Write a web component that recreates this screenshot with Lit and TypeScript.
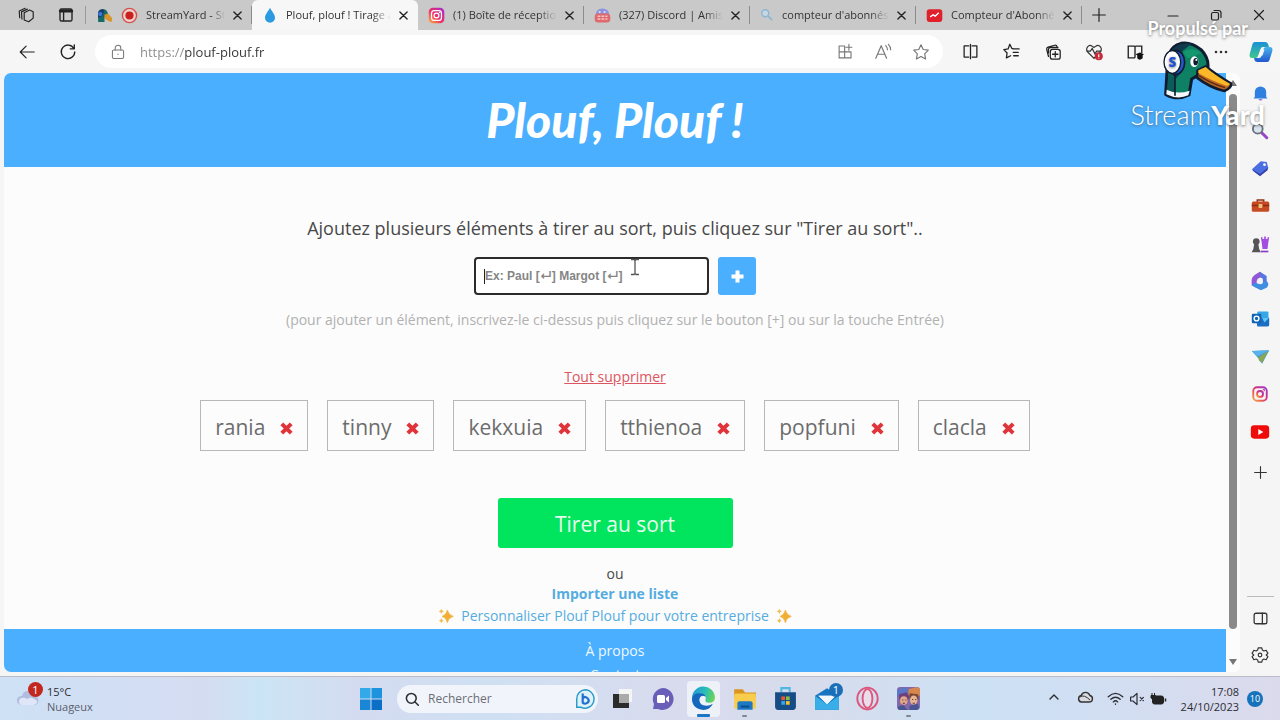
import { LitElement, html, svg, css } from "lit";
import { customElement, property, state } from "lit/decorators.js";
import { classMap } from "lit/directives/class-map.js";

const line = (size: number, paths: unknown, box = 20, width = 1.3) => html`<svg
  width=${size} height=${size} viewBox="0 0 ${box} ${box}" fill="none" stroke="currentColor"
  stroke-width=${width} stroke-linecap="round" stroke-linejoin="round" aria-hidden="true">${paths}</svg>`;

const art = (size: number, paths: unknown, box = 24) => html`<svg
  width=${size} height=${size} viewBox="0 0 ${box} ${box}" aria-hidden="true">${paths}</svg>`;

const cross = line(9, svg`<path d="M1 1l8 8M9 1l-8 8"/>`, 10, 1.5);

const instagram = (size: number) => art(size, svg`
  <defs><linearGradient id="ig" x1="0" y1="1" x2="1" y2="0">
    <stop offset="0" stop-color="#fdb53c"/><stop offset=".45" stop-color="#ef2f62"/><stop offset="1" stop-color="#a02bd8"/>
  </linearGradient></defs>
  <rect x="1" y="1" width="22" height="22" rx="6" fill="url(#ig)"/>
  <rect x="5" y="5" width="14" height="14" rx="4" fill="none" stroke="#fff" stroke-width="1.8"/>
  <circle cx="12" cy="12" r="3.4" fill="none" stroke="#fff" stroke-width="1.8"/><circle cx="16.3" cy="7.8" r="1" fill="#fff"/>`);

const tabIcons = {
  duck: art(17, svg`<path d="M3 21V7Q5 2 11 3q5 1 6 7l-5 5v6z" fill="#176b66"/><path d="M3 8q3-6 9-4l-3 9-6 2z" fill="#1d3a72"/>
    <path d="M12 11l5-2 6 7-1 5-4-1-6-4z" fill="#d9952b"/><circle cx="6" cy="10" r="3" fill="#3b78d8"/>`),
  record: art(17, svg`<circle cx="12" cy="12" r="10" fill="#efd3d0" stroke="#d4524c" stroke-width="2"/><circle cx="12" cy="12" r="5.8" fill="#c9211e"/>`),
  drop: art(16, svg`<path d="M12 1C9 7 4.500 11 4.500 16a7.500 7.500 0 0 0 15 0C19.500 11 15 7 12 1z" fill="#2a9be0"/>`),
  discord: art(17, svg`<path d="M2 12Q3 2 12 2t10 10z" fill="#8b93dd"/><rect x="1" y="9" width="22" height="13" rx="5" fill="#e0696c"/>
    <path d="M5 13h14M5 17h14" stroke="#f3c4c4" stroke-width="2" stroke-dasharray="4 1.500"/><circle cx="8" cy="7" r="1.500" fill="#dfe2fa"/><circle cx="15" cy="7" r="1.500" fill="#dfe2fa"/>`),
  search: art(14, svg`<circle cx="9" cy="9" r="6" fill="#c3d8e4" stroke="#8fb6d0" stroke-width="2.500"/><path d="M14 14l7 7" stroke="#8fb6d0" stroke-width="3"/>`),
  counter: art(17, svg`<rect x="1" y="3" width="22" height="18" rx="4" fill="#e0202b"/><path d="M6 14l4-3 3 2 5-5" fill="none" stroke="#fff" stroke-width="2"/>`),
};

const barIcons = {
  workspaces: line(18, svg`<path d="M8 7.500l6-3 4 2v7l-5 4-5-2zM5.500 14.500l-.5-8 6.500-3M3 13l-.5-7.500L9 2.500"/>`),
  panes: line(16, svg`<rect x="2.500" y="2.500" width="15" height="15" rx="2"/><path d="M3 5h14" stroke-width="4"/><path d="M7 6v11"/>`, 20, 1.7),
  plus: line(14, svg`<path d="M10 1v18M1 10h18"/>`, 20, 1.7),
  minimize: line(12, svg`<path d="M1 7h10"/>`, 12, 1.2),
  restore: line(12, svg`<rect x="1.500" y="3.500" width="7" height="7.500" rx="1.500"/><path d="M4 1.500h4.500Q11 1.500 11 4v4.500"/>`, 12, 1.2),
  close: line(12, svg`<path d="M1.500 1.500l9 9M10.500 1.500l-9 9"/>`, 12, 1.2),
  back: line(18, svg`<path d="M18 10H2.500M9 3.500L2.500 10 9 16.500"/>`),
  reload: line(18, svg`<path d="M16.500 6A7.500 7.500 0 1 0 17.500 10M17 2v4.500h-4.500"/>`, 20, 1.5),
  lock: line(16, svg`<rect x="3" y="7.500" width="14" height="10.500" rx="1.800"/><path d="M6.500 7.500V5a3.500 3.500 0 0 1 7 0v2.500M10 12.500v.5"/>`),
  apps: line(17, svg`<path d="M2.500 3.500H9v14H2.500zM2.500 10.500h14v7H9M14 1.500v7M10.500 5h7"/>`),
  star: line(18, svg`<path d="M10 2l2.500 5.200 5.600.8-4 4 1 5.700-5.100-2.700-5.100 2.700 1-5.700-4-4 5.600-.8z"/>`),
  split: line(17, svg`<path d="M8 3.500H2.500v13H8M12 3.500h5.500v13H12M10 1.500v17"/>`, 20, 1.5),
  favorites: line(17, svg`<path d="M12 6.500H10.500L8 1.500 6 7l-5 .8 3.800 3.900L4 17.500l5-2.500M12 7h7M12 11h6M12.500 15H18"/>`, 20, 1.5),
  collections: line(18, svg`<rect x="7" y="7" width="11" height="11" rx="2.500"/><path d="M12.500 9.500v6M9.500 12.500h6M5 15l-2-8Q2.800 5 4.500 4.500L12 2.500q2-.3 2.500 1.500M5 11V6.500Q5.500 5 7 5h8.500"/>`, 20, 1.4),
  health: html`<svg width="18" height="18" viewBox="0 0 20 20" fill="none" stroke="#333" stroke-width="1.300" aria-hidden="true">
    <path d="M10 17L3 10C0 6 4 1 8 3.500L10 5l2-1.500C16 1 20 6 17 10z"/><path d="M1.500 9H6l2-3 3 6 2-3h5"/><circle cx="15.300" cy="14.800" r="4.500" fill="#c52b39" stroke="none"/><path d="M15.300 12.500v3M15.300 16.500v.8" stroke="#fff"/></svg>`,
  reader: html`<svg width="18" height="18" viewBox="0 0 20 20" fill="none" stroke="#222" stroke-width="1.500" aria-hidden="true">
    <path d="M10 16.500H2.500v-13H9q1 0 1 1v12M10 4.500q0-1 1-1h6.500V11"/><path d="M10.500 12.500l5-2 4.500 2-1.500 1v3.500q-3.500 3-6 0v-3.500z" fill="#111" stroke="none"/></svg>`,
  more: html`<svg width="14" height="4" viewBox="0 0 14 4" fill="#333" aria-hidden="true"><circle cx="2" cy="2" r="1.300"/><circle cx="7" cy="2" r="1.300"/><circle cx="12" cy="2" r="1.300"/></svg>`,
  copilot: art(24, svg`<defs><linearGradient id="cpa" x1="0" y1="0" x2="0" y2="1"><stop offset="0" stop-color="#1b8fd8"/><stop offset="1" stop-color="#3fc78d"/></linearGradient>
    <linearGradient id="cpb" x1="0" y1="0" x2="0" y2="1"><stop offset="0" stop-color="#47b4ea"/><stop offset="1" stop-color="#2157d0"/></linearGradient></defs>
    <path d="M6 2h10q2.500 0 3 2l1 3h-6q-2 0-2.500 2L9 16q-.5 2-2.500 2H3q-3 0-2.300-4L3.500 4Q4 2 6 2z" fill="url(#cpa)"/>
    <path d="M17 7h4q3 0 2.300 4l-2.800 9q-.5 2-2.500 2H8.500q-2.500 0-3-2L5 18h5q2 0 2.500-2l2-7q.5-2 2.500-2z" fill="url(#cpb)"/>
    <path d="M13.500 9.500h2l-2 6h-2.200z" fill="#f5f5f5"/>`),
};

const sideIcons = [
  { name: "Notifications", icon: art(17, svg`<path d="M4 17V10a8 8 0 0 1 16 0v7l2 2H2z" fill="#2f7fe0"/><path d="M9 20h6q-3 4-6 0z" fill="#6a4fd0"/>`) },
  { name: "Recherche", icon: art(18, svg`<path d="M13 13l8 8" stroke="#9845c8" stroke-width="4" stroke-linecap="round"/><circle cx="9" cy="9" r="6.500" fill="#d8e4ef" stroke="#68707c" stroke-width="2.500"/>`) },
  { name: "Achats", icon: art(18, svg`<path d="M2 13L13 3l8 1 2 8-10 9q-2 1-3 0l-8-6q-1-1 0-2z" fill="#4b6fe2"/><path d="M2 14l10 6 11-9-1 4-10 8-9-7z" fill="#353fa8"/><circle cx="18" cy="7.500" r="1.800" fill="#fff"/>`) },
  { name: "Outils", icon: art(19, svg`<path d="M8 8V5h8v3" fill="none" stroke="#8c3418" stroke-width="2"/><rect x="1" y="7" width="22" height="13" rx="2" fill="#c64a22"/><path d="M1 12h22" stroke="#8f2e16" stroke-width="2"/><rect x="9.500" y="10" width="5" height="5" rx="1" fill="#f0c27a"/>`) },
  { name: "Jeux", icon: art(20, svg`<path d="M13 4h2v2h2V3h2v3h2V4h2l-1 6-1 8h-6l-1-8z" fill="#a44be0"/><circle cx="7.500" cy="9" r="4" fill="#555"/><path d="M5 12h5l1 6 2 4H2l2-4z" fill="#555"/><path d="M13 20h9v2h-9z" fill="#8c3ac8"/>`) },
  { name: "Microsoft 365", icon: art(20, svg`<path d="M12 1l8 5v7l-5 2V9L7 5z" fill="#5478e0"/><path d="M12 1L7 4Q2 7 2 11v6l6 3v-8l5-5z" fill="#9058d8"/><path d="M2 17l4-3 7 2 7-4q4 4 0 8l-7 3-6-3z" fill="#3e8fe2"/><circle cx="12" cy="12" r="3.600" fill="#f3f3f3"/>`) },
  { name: "Outlook", icon: art(19, svg`<rect x="8" y="3" width="14" height="10" rx="1" fill="#37a6e8"/><path d="M6 11h17v9q0 2-2 2H8z" fill="#1a6fc4"/><path d="M14 11h9l-6 6z" fill="#5cc6f5"/><rect x="1" y="6" width="12" height="12" rx="1.500" fill="#0f64b4"/><circle cx="7" cy="12" r="3" fill="none" stroke="#fff" stroke-width="1.800"/>`) },
  { name: "Drop", icon: art(19, svg`<path d="M1 5l22-1-9 17-4-6z" fill="#3c9bdb"/><path d="M22 5L9 13l1 4 4 3z" fill="#8aa650"/><path d="M1 5l22-1L8 12z" fill="#59b3ea"/>`) },
  { name: "Instagram", icon: html`<svg width="18" height="18" viewBox="0 0 24 24" fill="none" stroke="url(#igs)" stroke-width="2.500" aria-hidden="true"><defs><linearGradient id="igs" x1="0" y1="1" x2="1" y2="0"><stop offset="0" stop-color="#f7a63c"/><stop offset=".5" stop-color="#e0336f"/><stop offset="1" stop-color="#9a33cf"/></linearGradient></defs><rect x="3" y="3" width="18" height="18" rx="5"/><circle cx="12" cy="12" r="4"/><circle cx="17" cy="7" r=".5"/></svg>` },
  { name: "YouTube", icon: art(20, svg`<rect x="1" y="4" width="22" height="16" rx="4" fill="#f00b0b"/><path d="M10 8.500v7l6-3.500z" fill="#fff"/>`) },
];

const sparkles = art(16, svg`<path d="M14 3q1.500 7.500 9 9.500-7.500 2-9 9.500-1.500-7.500-8-9.500 6.500-2 8-9.500z" fill="#f2ae34" stroke="#f2ae34"/>
  <path d="M5 1q.7 3.200 4 4-3.300.8-4 4-.7-3.200-4-4 3.300-.8 4-4zM5 15q.7 3.200 3.500 4-2.800.8-3.500 4-.7-3.200-3.500-4 2.800-.8 3.500-4z" fill="#f0bd55"/>`);

@customElement("browser-tab")
class BrowserTab extends LitElement {
  @property() label = "";
  @property({ type: Boolean, reflect: true }) active = false;
  @property({ attribute: false }) icons: unknown[] = [];
  static styles = css`
    :host { flex: 0 1 166px; min-width: 0; display: flex; align-items: center; gap: 8px; box-sizing: border-box;
      padding: 0 6px 0 10px; height: 30px; position: relative; color: #333; }
    :host(:not([active]))::after { content: ""; position: absolute; right: 0; top: 6px; height: 18px; width: 1px; background: #8c8c8c; }
    :host([active]) { background: #f7f7f7; border-radius: 6px 6px 0 0; }
    :host([active])::after { display: none; }
    .icon { display: flex; }
    .label { flex: 1; min-width: 0; overflow: hidden; white-space: nowrap; font: 11px/18px "Open Sans", sans-serif;
      mask-image: linear-gradient(90deg, #000 82%, transparent); }
    .close { display: flex; border: 0; padding: 4px; margin-left: -4px; background: none; color: #222; }
  `;
  render() {
    return html`${this.icons.map((i) => html`<span class="icon">${i}</span>`)}
      <span class="label">${this.label}</span><button class="close" aria-label="Fermer l'onglet">${cross}</button>`;
  }
}

@customElement("browser-chrome")
class BrowserChrome extends LitElement {
  static styles = css`
    :host { display: block; font-family: "Open Sans", sans-serif; }
    button { display: flex; align-items: center; justify-content: center; border: 0; padding: 0; background: none; color: #222; }
    .tabs { display: flex; align-items: center; height: 30px; background: #c9c9c9; }
    .lead { display: flex; justify-content: space-around; align-items: center; width: 86px; padding-left: 6px; box-sizing: border-box; border-right: 1px solid #999; height: 18px; flex: none; }
    .new { width: 34px; height: 30px; }
    .window { margin-left: auto; display: flex; }
    .window button { width: 43px; height: 30px; }
    .toolbar { display: flex; align-items: center; height: 43px; background: #f6f6f6; }
    .nav { display: flex; width: 95px; padding-left: 6px; box-sizing: border-box; flex: none; }
    .nav button { width: 41px; }
    .address { flex: 1; min-width: 0; display: flex; align-items: center; height: 33px; border-radius: 17px; background: #fff; padding: 0 3px 0 15px; color: #777; }
    .url { flex: 1; min-width: 0; margin-left: 14px; border: 0; outline: 0; padding: 0; font: 13px/20px "Open Sans", sans-serif;
      color: transparent; background: linear-gradient(90deg, #8a8a8a 45px, #333 45px) text; }
    .address button { width: 38px; color: #777; }
    .tools { display: flex; padding-left: 7px; }
    .tools button { width: 41px; }
    .profile { width: 45px; }
    .tools .copilot { width: 39px; }
  `;
  render() {
    const i = tabIcons;
    const b = barIcons;
    return html`
      <div class="tabs">
        <div class="lead"><button aria-label="Espaces de travail">${b.workspaces}</button><button aria-label="Onglets">${b.panes}</button></div>
        <browser-tab label="StreamYard - Stu" .icons=${[i.duck, i.record]}></browser-tab>
        <browser-tab active label="Plouf, plouf ! Tirage a" .icons=${[i.drop]}></browser-tab>
        <browser-tab label="(1) Boîte de réceptio" .icons=${[instagram(17)]}></browser-tab>
        <browser-tab label="(327) Discord | Amis" .icons=${[i.discord]}></browser-tab>
        <browser-tab label="compteur d'abonnés" .icons=${[i.search]}></browser-tab>
        <browser-tab label="Compteur d'Abonné" .icons=${[i.counter]}></browser-tab>
        <button class="new" aria-label="Nouvel onglet">${b.plus}</button>
        <div class="window">
          <button aria-label="Réduire">${b.minimize}</button><button aria-label="Restaurer">${b.restore}</button><button aria-label="Fermer">${b.close}</button>
        </div>
      </div>
      <div class="toolbar">
        <div class="nav"><button aria-label="Retour">${b.back}</button><button aria-label="Actualiser">${b.reload}</button></div>
        <div class="address">${b.lock}
          <input class="url" aria-label="Adresse" value="https://plouf-plouf.fr" />
          <button aria-label="Applications">${b.apps}</button>
          <button aria-label="Lecture à voix haute">${line(18, svg`<path d="M2 17L8 3l6 14M4 12.500h8M13 3q2 2 2 4.500M16 1.500q2.500 2.500 2.500 6"/>`)}</button>
          <button aria-label="Favori">${b.star}</button>
        </div>
        <div class="tools">
          <button aria-label="Fractionner">${b.split}</button><button aria-label="Favoris">${b.favorites}</button>
          <button aria-label="Collections">${b.collections}</button><button aria-label="Performances">${b.health}</button>
          <button aria-label="Lecteur">${b.reader}</button><span class="profile"></span>
          <button aria-label="Plus">${b.more}</button><button class="copilot" aria-label="Copilot">${b.copilot}</button>
        </div>
      </div>`;
  }
}

@customElement("plouf-page")
class PloufPage extends LitElement {
  @state() names = ["rania", "tinny", "kekxuia", "tthienoa", "popfuni", "clacla"];
  static styles = css`
    :host { display: block; background: #fcfcfc; color: #484848; font: 14px/20px "Open Sans", sans-serif; text-align: center; overflow: hidden; }
    a { text-decoration: none; color: #55ace0; }
    button { border: 0; padding: 0; font: inherit; }
    header { height: 94px; display: flex; align-items: center; justify-content: center; background: #4aaffe; }
    h1 { margin: 0; color: #fff; font: italic 900 48px/60px Lato, cursive; }
    main { display: flex; flex-direction: column; align-items: center; padding: 46px 16px 3px; }
    h2 { margin: 0 0 14px; font-size: 18px; line-height: 30px; font-weight: 400; }
    form { display: flex; gap: 9px; }
    .field { position: relative; display: flex; }
    .entry { box-sizing: border-box; width: 235px; height: 38px; border: 2px solid #2b2b2b; border-radius: 4px; background: #fff; outline: 0;
      padding: 0 9px; font: bold 12px "Liberation Sans", Inter, sans-serif; }
    .entry::placeholder { color: #858585; opacity: 1; }
    .caret { position: absolute; left: 10px; top: 12px; width: 1px; height: 15px; background: #222; }
    .pointer { position: absolute; left: 155px; top: 1px; }
    .add { display: flex; align-items: center; justify-content: center; width: 38px; height: 38px; border-radius: 3px; background: #4aaffe; }
    .hint { margin: 15px 0 37px; color: #b1b1b1; }
    .clear { background: none; color: #dc5560; text-decoration: underline; margin-bottom: 13px; }
    ul { display: flex; flex-wrap: wrap; justify-content: center; gap: 19px; margin: 0 0 47px; padding: 0; list-style: none; }
    li { display: flex; align-items: center; gap: 15px; height: 51px; box-sizing: border-box; padding: 3px 14px 0; border: 1px solid #b8b8b8; font-size: 21px; line-height: 30px; color: #6c6c6c; }
    .remove { display: flex; background: none; padding-top: 3px; }
    .draw { width: 235px; height: 50px; padding-top: 2px; border-radius: 3px; background: #00e45e; color: #e8fff0; font-size: 21px; margin-bottom: 16px; }
    .import { font-weight: 700; }
    .custom { display: flex; align-items: center; gap: 7px; margin-top: 2px; }
    footer { display: flex; flex-direction: column; align-items: center; background: #4aaffe; padding: 10px; line-height: 24px; }
    footer a { color: #eff8ff; }
  `;
  remove(name: string) {
    this.names = this.names.filter((n) => n !== name);
  }
  render() {
    return html`
      <header><h1>Plouf, Plouf !</h1></header>
      <main>
        <h2>Ajoutez plusieurs éléments à tirer au sort, puis cliquez sur "Tirer au sort"..</h2>
        <form @submit=${(e: Event) => e.preventDefault()}>
          <div class="field">
            <input class="entry" aria-label="Élément à ajouter" placeholder="Ex: Paul [↵] Margot [↵]" />
            <span class="caret"></span>
            <svg class="pointer" width="12" height="18" viewBox="0 0 12 18" fill="none" stroke="#555" stroke-width="1.300" aria-hidden="true"><path d="M2 1.500h3l1 1 1-1h3M6 2v14M2 16.500h3l1-1 1 1h3"/></svg>
          </div>
          <button class="add" aria-label="Ajouter"><svg width="13" height="13" viewBox="0 0 13 13" stroke="#fff" stroke-width="4" aria-hidden="true"><path d="M6.500.5v12M.5 6.500h12"/></svg></button>
        </form>
        <p class="hint">(pour ajouter un élément, inscrivez-le ci-dessus puis cliquez sur le bouton [+] ou sur la touche Entrée)</p>
        <button class="clear" @click=${() => (this.names = [])}>Tout supprimer</button>
        <ul>${this.names.map((n) => html`<li>${n}<button class="remove" aria-label="Supprimer ${n}" @click=${() => this.remove(n)}>
          <svg width="13" height="13" viewBox="0 0 13 13" stroke="#e0343b" stroke-width="4" aria-hidden="true"><path d="M1.800 1.800l9.400 9.400M11.200 1.800l-9.400 9.400"/></svg></button></li>`)}</ul>
        <button class="draw">Tirer au sort</button>
        <span>ou</span>
        <a class="import" href="#import">Importer une liste</a>
        <a class="custom" href="#entreprise">${sparkles}<span>Personnaliser Plouf Plouf pour votre entreprise</span>${sparkles}</a>
      </main>
      <footer><a href="#a-propos">À propos</a><a href="#contact">Contact</a></footer>`;
  }
}

@customElement("side-bar")
class SideBar extends LitElement {
  static styles = css`
    :host { display: flex; flex-direction: column; align-items: center; background: #f5f5f5; width: 40px; box-sizing: border-box; padding: 9px 0 10px; color: #333; }
    button { display: flex; align-items: center; justify-content: center; border: 0; padding: 0; background: none; color: inherit; width: 32px; height: 22px; }
    .apps { display: flex; flex-direction: column; justify-content: space-between; flex: 0 1 361px; margin-bottom: 18px; }
    .bottom { margin-top: auto; display: flex; flex-direction: column; align-items: center; gap: 15px; border-top: 1px solid #bbb; padding: 10px 0 0; width: 27px; }
  `;
  render() {
    return html`<nav class="apps">${sideIcons.map((s) => html`<button aria-label=${s.name}>${s.icon}</button>`)}</nav>
      <button aria-label="Personnaliser">${line(13, svg`<path d="M10 1v18M1 10h18"/>`, 20, 1.7)}</button>
      <div class="bottom">
        <button aria-label="Volet">${line(15, svg`<rect x="1.500" y="3" width="17" height="14" rx="2.500"/><path d="M12.500 3v14"/>`, 20, 1.7)}</button>
        <button aria-label="Paramètres">${line(18, svg`<path d="M8 2h4l.6 2.500 1.700 1 2.500-.8 2 3.500-1.900 1.800 1.900 1.800-2 3.500-2.500-.8-1.700 1L12 18H8l-.6-2.500-1.700-1-2.500.8-2-3.500L3.100 10 1.200 8.200l2-3.500 2.500.8 1.700-1z"/><circle cx="10" cy="10" r="2"/>`)}</button>
      </div>`;
  }
}

const taskApps = [
  { name: "Vue des tâches", icon: art(24, svg`<rect x="9" y="2" width="13" height="13" fill="#f5f5f5"/><rect x="3" y="7" width="16" height="14" fill="#2b2b2b"/><rect x="9" y="7" width="10" height="9" fill="#aaa"/>`) },
  { name: "Conversation", icon: art(24, svg`<path d="M12 1a11 11 0 1 1-5 21H2l1-5A11 11 0 0 1 12 1z" fill="#6a5fb8"/><rect x="6" y="8" width="8" height="8" rx="1.500" fill="#fff"/><path d="M15 11l3-2.500v7L15 13z" fill="#fff"/>`) },
  { name: "Edge", active: true, icon: art(25, svg`<defs><linearGradient id="eda" x1="0" y1="0" x2="1" y2=".3"><stop offset="0" stop-color="#1e94dc"/><stop offset=".6" stop-color="#2cbfb5"/><stop offset="1" stop-color="#6ad257"/></linearGradient></defs>
    <path d="M1 12A11 11 0 0 1 23 11q0 5-6 5-4 0-3-3 1-4-3-4-6 0-6 6 0 5 5 8Q1 20 1 12z" fill="url(#eda)"/><path d="M1 12q1-5 7-5 5 0 6 3-5-2-6 3 0 6 7 6 3 0 6-2-3 6-9 6Q1 22 1 12z" fill="#1566bd"/>`) },
  { name: "Explorateur", open: true, icon: art(26, svg`<path d="M2 3h8l2 3h10v5H2z" fill="#d9951e"/><rect x="2" y="7" width="20" height="14" rx="1.500" fill="#f8cc4d"/><path d="M5 16q0-2 2-2h10q2 0 2 2v6H5z" fill="#1d79c4"/><path d="M8 19h8" stroke="#0d508e" stroke-width="2"/>`) },
  { name: "Store", icon: art(25, svg`<path d="M8 6V2h8v4" fill="none" stroke="#50b7e2" stroke-width="2"/><path d="M2 6h20v14q0 3-3 3H5q-3 0-3-3z" fill="#164d84"/><path d="M8 10h3.500v3.500H8z" fill="#f0552c"/><path d="M12.500 10H16v3.500h-3.500z" fill="#84c044"/><path d="M8 14.500h3.500V18H8z" fill="#35a8e8"/><path d="M12.500 14.500H16V18h-3.500z" fill="#f8c12c"/>`) },
  { name: "Courrier", count: 1, icon: art(26, svg`<path d="M1 9l11-7 11 7v13H1z" fill="#1676c2"/><path d="M4 9h16l-8 8z" fill="#f3f8fc"/><path d="M1 9l11 8L23 9v13H1z" fill="#39aee8"/><path d="M4 9h16l-8 7z" fill="#f3f8fc"/>`) },
  { name: "Opera", icon: art(25, svg`<ellipse cx="12" cy="12" rx="9.800" ry="10.500" fill="none" stroke="#dd557c" stroke-width="1.800"/><ellipse cx="12" cy="12" rx="4.700" ry="9" fill="#eadce8" stroke="#dd557c" stroke-width="1.800"/>`) },
  { name: "Jeu", open: true, icon: art(25, svg`<rect x="1" y="1" width="22" height="22" rx="3" fill="#8468a8"/><path d="M1 4l7-3 7 4-4 5H1z" fill="#5b76c4"/><path d="M12 3l8-2 3 2v6H12z" fill="#d9864c"/><path d="M3 8l7-2 3 4-1 3H3z" fill="#6d3f7c"/><path d="M13 7l8 1 1 5h-9z" fill="#7a4630"/>
    <ellipse cx="7.500" cy="14" rx="3.600" ry="4.200" fill="#e2a888"/><ellipse cx="17" cy="13.500" rx="3.600" ry="4.400" fill="#e6b393"/><path d="M2 20l5-2 4 5H3q-2-1-1-3zM13 19l8-2 1 4-2 2h-7z" fill="#4a5594"/><path d="M6 13.500h1M9 13.500h1M15.500 13h1M18.500 13h1M6.500 16.500h2M16 16.500h2" stroke="#5b2b35"/>`) },
] as { name: string; icon: unknown; active?: boolean; open?: boolean; count?: number }[];

@customElement("task-bar")
class TaskBar extends LitElement {
  static styles = css`
    :host { display: grid; grid-template-columns: 1fr auto 1fr; align-items: center; height: 44px; box-sizing: border-box; border-top: 1px solid #b9bcc6;
      background: linear-gradient(90deg, #cee1f5, #d5dcf2 16%, #cbe5f5 20%, #d4dbf0 28%, #cfe0f3 38%, #d8dbee 52%, #d6dcec 64%, #cce1f4 76%, #d0dff3 84%, #dbdaec);
      font: 11px/15px "Open Sans", sans-serif; color: #2b2d33; }
    button { border: 0; padding: 0; background: none; font: inherit; color: inherit; display: flex; align-items: center; justify-content: center; }
    .weather { display: flex; justify-self: start; gap: 8px; padding-left: 16px; text-align: left; position: relative; }
    .weather small { display: block; font-size: 11px; color: #5a606c; }
    .alert, .count { position: absolute; display: flex; align-items: center; justify-content: center; border-radius: 50%; color: #fff; }
    .alert { left: 28px; top: -2px; width: 15px; height: 15px; background: #c2281f; }
    .apps { display: flex; align-items: center; padding-left: 2px; }
    .start { width: 36px; height: 36px; margin-right: 8px; }
    .search { display: flex; align-items: center; gap: 9px; width: 201px; height: 28px; box-sizing: border-box; padding: 0 2px 0 8px; border-radius: 14px; background: #f1f5fb; margin-right: 3px; }
    .search input { flex: 1; min-width: 0; border: 0; outline: 0; padding: 0; background: none; font: 12px/18px "Open Sans", sans-serif; }
    .search input::placeholder { color: #6b6e76; opacity: 1; }
    .app { position: relative; width: 33px; height: 36px; margin: 0 4px; border-radius: 4px; }
    .app.active { background: #eef1f8; }
    .app.active::after, .app.open::after { content: ""; position: absolute; bottom: 0; width: 5px; height: 2px; border-radius: 1px; background: #808590; }
    .app.active::after { width: 13px; height: 3px; background: #1976c4; }
    .count { right: 0; top: 2px; width: 14px; height: 14px; background: #1a6fb8; }
    .tray { display: flex; align-items: center; justify-self: end; gap: 5px; padding-right: 17px; }
    .tray .up { margin-right: 12px; }
    .tray .cloud { margin-right: 8px; }
    .clock { text-align: right; margin-left: 9px; }
    .clock time { display: block; }
    .badge { display: flex; align-items: center; justify-content: center; width: 16px; height: 16px; border-radius: 50%; background: #1673bb; color: #fff; font-size: 9px; margin-left: 3px; }
  `;
  render() {
    return html`
      <button class="weather">
        <svg width="23" height="30" viewBox="0 0 23 30" aria-hidden="true"><path d="M5 21a4.500 4.500 0 0 1 1-9q1-5 6-5t6 5a4.500 4.500 0 0 1 0 9z" fill="#b0bde0"/><path d="M5 21a4 4 0 0 1 0-7q4-1 6 1 4-3 7 0 4 1 3 4l-3 2z" fill="#dfe6f7"/></svg>
        <span class="alert">1</span><span>15°C<small>Nuageux</small></span>
      </button>
      <div class="apps">
        <button class="start" aria-label="Démarrer"><svg width="22" height="22" viewBox="0 0 22 22" aria-hidden="true"><path d="M0 0h10.500v10.500H0z" fill="#32a9e8"/><path d="M11.500 0H22v10.500H11.500z" fill="#1c93dd"/><path d="M0 11.500h10.500V22H0z" fill="#1986d6"/><path d="M11.500 11.500H22V22H11.500z" fill="#0b6fc6"/></svg></button>
        <label class="search">${line(14, svg`<circle cx="9" cy="9" r="7"/><path d="M14 14l5 5"/>`, 20, 2.2)}
          <input aria-label="Rechercher" placeholder="Rechercher" />
          ${art(22, svg`<path d="M12 2a10 10 0 1 1-4.500 19H3V12a9.500 9.500 0 0 1 9-10z" fill="#dff2fa" stroke="#2a9bc8" stroke-width="1.600"/><path d="M9.500 6v10q2 2 4.500.5t2-3.500-3-3-2.500 1.500" fill="none" stroke="#216fd0" stroke-width="2.400"/>`)}
        </label>
        ${taskApps.map((a) => html`<button class=${classMap({ app: true, active: !!a.active, open: !!a.open })} aria-label=${a.name}>${a.icon}${a.count ? html`<span class="count">${a.count}</span>` : ""}</button>`)}
      </div>
      <div class="tray">
        <span class="up">${line(12, svg`<path d="M2 8l4-4 4 4"/>`, 12, 1.4)}</span>
        <span class="cloud"><svg width="17" height="14" viewBox="0 0 17 14" fill="#d8dbe0" stroke="#333" stroke-width="1.400" aria-hidden="true"><path d="M4.500 12a3.300 3.300 0 0 1-.3-6.500 4.600 4.600 0 0 1 8.700 0A3.300 3.300 0 0 1 12.500 12z"/><path d="M3 7q4-3 10 3" stroke-width="1"/></svg></span>
        ${line(17, svg`<path d="M1.500 8q8.500-8 17 0M4.500 11q5.500-5 11 0M7.500 14q2.500-2.500 5 0M10 16.500v.3"/>`, 20, 1.6)}
        ${line(16, svg`<path d="M2 7.500h3L10 3v14l-5-4.500H2zM14 8l4 4M18 8l-4 4"/>`, 20, 1.5)}
        <svg width="17" height="14" viewBox="0 0 17 14" aria-hidden="true"><rect x="2.500" y="4" width="11" height="8" rx="2" fill="#222" stroke="#222"/><path d="M15.500 6.500v3" stroke="#222" stroke-width="1.500"/><path d="M2 1v2M4.500 1v2M1 3.500h4.500V6l-2 1.500L1 6z" stroke="#222" fill="#222"/></svg>
        <div class="clock"><time>17:08</time><time>24/10/2023</time></div>
        <span class="badge">10</span>
      </div>`;
  }
}

@customElement("stream-mark")
class StreamMark extends LitElement {
  static styles = css`
    :host { display: flex; flex-direction: column; align-items: center; color: #fff; font-family: Lato, sans-serif; text-shadow: 0 1px 3px rgba(70, 70, 70, 0.7); }
    .by { font-weight: 700; font-size: 18px; line-height: 22px; }
    .brand { font-weight: 300; font-size: 27px; line-height: 28px; }
    .brand b { font-weight: 900; }
    .letter { font: 800 40px "Open Sans", sans-serif; }
  `;
  render() {
    return html`<span class="by">Propulsé par</span>
      <svg width="73" height="62" viewBox="1020 120 219 186" aria-hidden="true">
        <path d="M1038 215L1034 286Q1068 306 1104 288L1112 240 1160 212Q1166 178 1140 152 1110 128 1080 133 1054 140 1046 162z" fill="#0e8063" stroke="#101c30" stroke-width="9" stroke-linejoin="round"/>
        <path d="M1048 160Q1066 128 1112 134L1084 156 1088 210 1066 238 1042 220z" fill="#12384c"/>
        <path d="M1042 222L1062 236V290L1038 282z" fill="#0b5b58"/>
        <path d="M1086 160Q1112 140 1142 162L1100 178z" fill="#13976d"/>
        <path d="M1037 272Q1068 288 1106 275L1102 289Q1070 303 1036 286z" fill="#f5f7f8"/>
        <path d="M1062 222V290" stroke="#101c30" stroke-width="5"/>
        <path d="M1130 214L1154 202Q1180 224 1230 254 1232 266 1210 276 1166 266 1128 236z" fill="#bd6722" stroke="#101c30" stroke-width="8" stroke-linejoin="round"/>
        <path d="M1132 214L1154 204Q1180 228 1228 255L1218 261Q1172 246 1132 222z" fill="#fbb829"/>
        <path d="M1134 230Q1170 254 1212 266" stroke="#5a2b16" stroke-width="4" fill="none"/>
        <ellipse cx="1120" cy="188" rx="12" ry="16" fill="#fff"/><ellipse cx="1124" cy="188" rx="7" ry="11" fill="#101c30"/><circle cx="1126" cy="183" r="3" fill="#fff"/>
        <ellipse cx="1064" cy="190" rx="27" ry="36" fill="#2457cc" stroke="#101c30" stroke-width="5"/>
        <ellipse cx="1054" cy="189" rx="25" ry="34" fill="#fff" stroke="#101c30" stroke-width="4"/>
        <text class="letter" x="1054" y="203" text-anchor="middle" fill="#2350d0">S</text>
      </svg>
      <span class="brand">Stream<b>Yard</b></span>`;
  }
}

@customElement("app-root")
class AppRoot extends LitElement {
  static styles = css`
    :host { display: grid; grid-template-rows: auto minmax(0, 1fr) auto; height: 100vh; position: relative; overflow: hidden; background: #f5f5f5; }
    .body { display: flex; min-height: 0; }
    .view { flex: 1; min-width: 0; display: flex; margin: 0 0 4px 4px; border-radius: 7px; overflow: hidden; background: #fff; }
    .page { flex: 1; min-width: 0; }
    .scroll { display: flex; flex-direction: column; align-items: center; width: 14px; padding: 7px 0; box-sizing: border-box; background: #fcfcfc; gap: 8px; }
    .thumb { width: 8px; flex: 1; border-radius: 4px; background: #8a8a8a; margin-bottom: 22px; }
    .mark { position: absolute; right: 15px; top: 17px; }
  `;
  render() {
    const arrow = (d: string) => html`<svg width="8" height="6" viewBox="0 0 8 6" fill="#777" aria-hidden="true"><path d=${d} /></svg>`;
    return html`
      <browser-chrome></browser-chrome>
      <div class="body">
        <div class="view"><plouf-page class="page"></plouf-page>
          <div class="scroll">${arrow("M0 6L4 0l4 6z")}<div class="thumb"></div>${arrow("M0 0l4 6 4-6z")}</div>
        </div>
        <side-bar></side-bar>
      </div>
      <task-bar></task-bar>
      <stream-mark class="mark"></stream-mark>`;
  }
}
